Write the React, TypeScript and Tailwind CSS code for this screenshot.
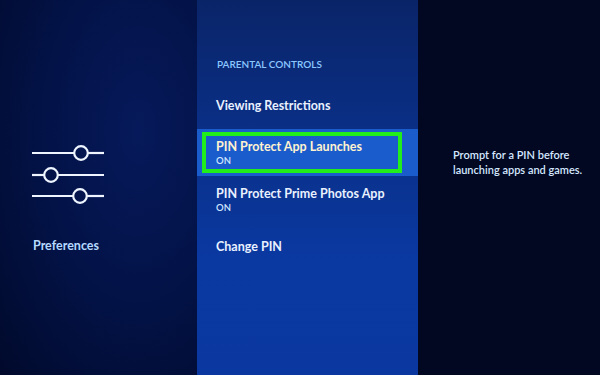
import * as React from 'react';

const font = { fontFamily: 'Lato, "Noto Sans", sans-serif' };

function SlidersIcon() {
    const rows = [
        { y: 8, knob: 50 },
        { y: 30, knob: 20 },
        { y: 51, knob: 49 },
    ];
    return (
        <svg width="74" height="60" viewBox="0 0 74 60" fill="none" stroke="#eef5ff" strokeWidth="2.2">
            {rows.map((row) => (
                <g key={row.y}>
                    <line x1="1" y1={row.y} x2={row.knob - 7} y2={row.y} />
                    <line x1={row.knob + 7} y1={row.y} x2="73" y2={row.y} />
                    <circle cx={row.knob} cy={row.y} r="6.8" />
                </g>
            ))}
        </svg>
    );
}

interface MenuItem {
    label: string;
    sub?: string;
    focused?: boolean;
}

const items: MenuItem[] = [
    { label: 'Viewing Restrictions' },
    { label: 'PIN Protect App Launches', sub: 'ON', focused: true },
    { label: 'PIN Protect Prime Photos App', sub: 'ON' },
    { label: 'Change PIN' },
];

export default function App() {
    return (
        <div className="flex h-[375px] w-[600px] overflow-hidden" style={font}>
            <div className="flex w-[197px] flex-col items-center bg-[radial-gradient(ellipse_at_70%_35%,#06195a_0%,#031349_45%,#010a2c_100%)] pt-[145px]">
                <div className="ml-[-62px]">
                    <SlidersIcon />
                </div>
                <div className="ml-[-65px] mt-[32px] text-[12.5px] font-bold text-[#b5d9ff]">Preferences</div>
            </div>

            <div className="flex w-[221px] flex-col bg-[linear-gradient(180deg,#0a2468_0%,#0a2f86_35%,#0a39a2_70%,#0a38a0_100%)] pt-[57px]">
                <div className="pl-[20px] text-[10px] font-semibold text-[#8cc7ff]">PARENTAL CONTROLS</div>
                <div className="mt-[10px] flex flex-col">
                    {items.map((item) => (
                        <div
                            key={item.label}
                            className={
                                item.focused
                                    ? 'flex h-[47px] items-center bg-[#1b5ccc] px-[5px]'
                                    : 'flex h-[47px] items-center px-[19px]'
                            }
                        >
                            {item.focused ? (
                                <div className="flex h-[41px] w-[200px] flex-col justify-center border-[4px] border-[#22ee1c] pl-[10px]">
                                    <div className="text-[12.5px] font-bold leading-[16px] text-[#fff3cf]">{item.label}</div>
                                    <div className="text-[9.5px] font-semibold leading-[12px] text-[#cfe6ff]">{item.sub}</div>
                                </div>
                            ) : (
                                <div className="flex flex-col">
                                    <div className="text-[12.5px] font-bold leading-[16px] text-[#e9f1ff]">{item.label}</div>
                                    {item.sub ? (
                                        <div className="text-[9.5px] font-semibold leading-[12px] text-[#cfe6ff]">{item.sub}</div>
                                    ) : null}
                                </div>
                            )}
                        </div>
                    ))}
                </div>
            </div>

            <div className="flex flex-1 flex-col bg-[#020722] pl-[35px] pt-[147px]">
                <div className="text-[11px] font-semibold leading-[15px] text-[#d4e8ff]">
                    Prompt for a PIN before
                    <br />
                    launching apps and games.
                </div>
            </div>
        </div>
    );
}
